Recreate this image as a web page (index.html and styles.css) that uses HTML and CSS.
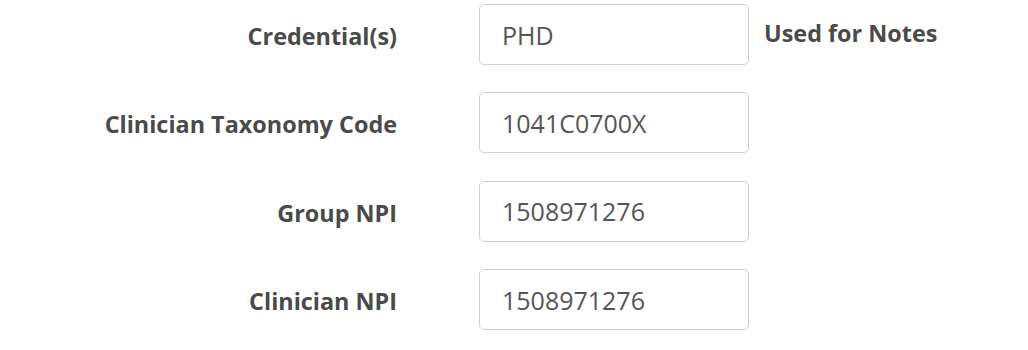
FILE: index.html
```html
<!DOCTYPE html>
<html>
<head>
<meta charset="utf-8">
<link rel="stylesheet" href="styles.css">
</head>
<body>
<form class="form">
  <div class="row">
    <label class="label">Credential(s)</label>
    <input class="input" type="text" value="PHD">
    <span class="help">Used for Notes</span>
  </div>
  <div class="row">
    <label class="label">Clinician Taxonomy Code</label>
    <input class="input" type="text" value="1041C0700X">
  </div>
  <div class="row">
    <label class="label">Group NPI</label>
    <input class="input" type="text" value="1508971276">
  </div>
  <div class="row">
    <label class="label">Clinician NPI</label>
    <input class="input" type="text" value="1508971276">
  </div>
</form>
</body>
</html>
```

FILE: styles.css
```css
html, body {
  margin: 0;
  padding: 0;
  background: #fff;
}
body {
  font-family: "Open Sans", "Liberation Sans", sans-serif;
}
.form {
  display: flex;
  flex-direction: column;
  gap: 27.4px;
  padding-top: 4px;
}
.row {
  display: grid;
  grid-template-columns: 397px 270px auto;
  column-gap: 82px;
  align-items: center;
  height: 61px;
}
.label {
  justify-self: end;
  font-weight: 700;
  font-size: 23.4px;
  color: #4a4a4a;
  grid-column: 1;
  margin-top: 3px;
}
.input {
  grid-column: 2;
  box-sizing: border-box;
  width: 270px;
  height: 61px;
  border: 1px solid #cfcfcf;
  border-radius: 5px;
  padding: 0 22px;
  font-family: "Open Sans", "Liberation Sans", sans-serif;
  font-size: 25px;
  color: #555;
  background: #fff;
  outline: none;
}
.help {
  grid-column: 3;
  align-self: start;
  margin-left: -67px;
  margin-top: 13px;
  font-weight: 700;
  font-size: 23.4px;
  color: #4a4a4a;
}
```
